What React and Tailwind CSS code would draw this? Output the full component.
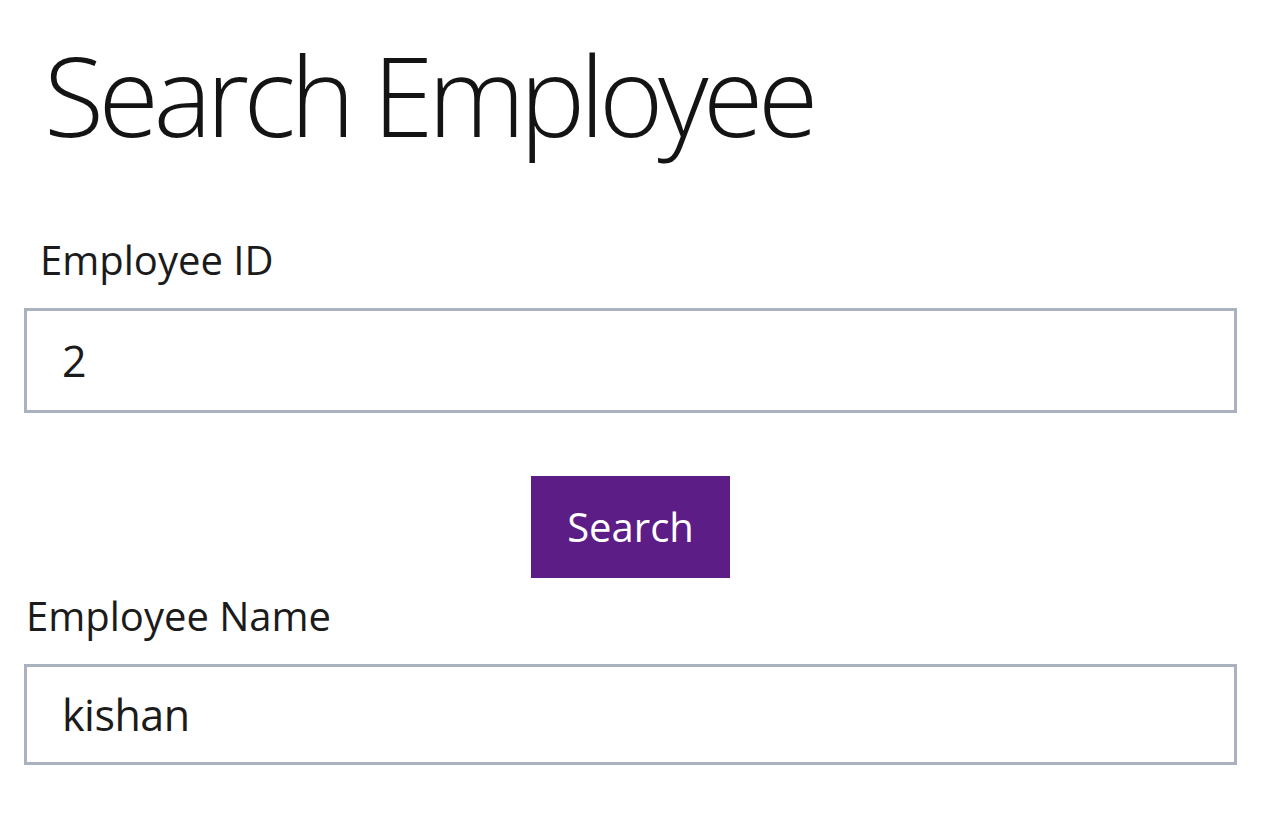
const Field = ({ label, value, labelClass, inputClass }) => (
  <div className="flex flex-col">
    <label className={labelClass}>{label}</label>
    <input
      readOnly
      value={value}
      className={`mt-[28px] block w-[1213px] border-[3px] border-[#aab2bf] bg-white pl-[35px] text-[43px] tracking-[-0.5px] text-[#1b1b1b] outline-none ${inputClass}`}
    />
  </div>
);

export default function App() {
  return (
    <div className="min-h-[816px] w-[1272px] bg-white pl-[24px] font-['Open_Sans','Noto_Sans',sans-serif] text-[#1b1b1b]">
      <h1 className="pl-[20px] pt-[39px] text-[110px] leading-[110px] font-light tracking-[-5.5px] text-[#141414]">
        Search Employee
      </h1>
      <div className="mt-[91px]">
        <Field
          label="Employee ID"
          value="2"
          labelClass="block h-[40px] pl-[16px] text-[40px] leading-[40px]"
          inputClass="h-[105px]"
        />
      </div>
      <div className="mt-[63px] flex w-[1213px] justify-center">
        <button className="h-[102px] w-[199px] bg-[#5c1d87] text-[40px] text-white">
          Search
        </button>
      </div>
      <div className="mt-[18px]">
        <Field
          label="Employee Name"
          value="kishan"
          labelClass="block h-[40px] pl-[2px] text-[40px] leading-[40px]"
          inputClass="h-[101px]"
        />
      </div>
    </div>
  );
}
